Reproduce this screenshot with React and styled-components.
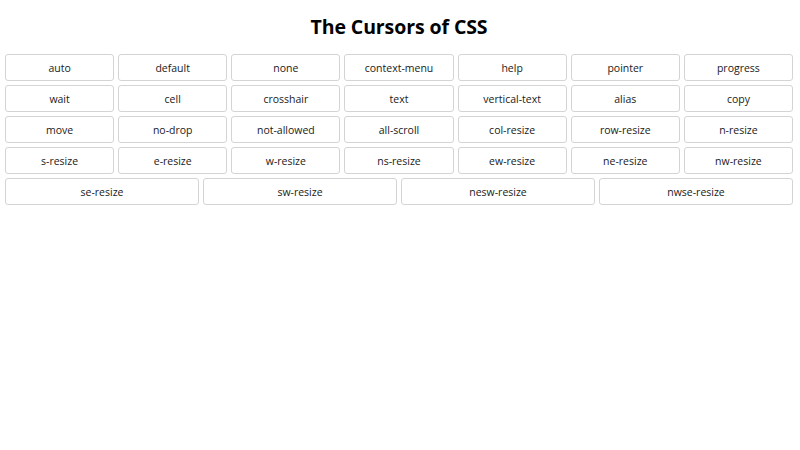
import React from "react";
import styled, { createGlobalStyle } from "styled-components";

const GlobalStyle = createGlobalStyle`
  body {
    margin: 0;
    background: #fff;
    font-family: "Open Sans", "Noto Sans", sans-serif;
    color: #111;
  }
`;

const Page = styled.div`
  padding: 0 7px 0 5px;
`;

const Title = styled.h1`
  margin: 13px 0 13px;
  text-align: center;
  font-size: 19.5px;
  font-weight: 700;
  line-height: 28px;
  letter-spacing: -0.1px;
  color: #000;
`;

const Grid = styled.div`
  display: flex;
  flex-wrap: wrap;
  gap: 4px;
`;

const CursorBox = styled.div`
  flex: 1 1 100px;
  height: 27px;
  box-sizing: border-box;
  border: 1.5px solid #d4d4d4;
  border-radius: 3px;
  display: flex;
  align-items: center;
  justify-content: center;
  font-size: 10.5px;
  color: #1a1a1a;
  cursor: ${(p) => p.$cursor};
`;

const cursors = [
  "auto", "default", "none", "context-menu", "help", "pointer", "progress",
  "wait", "cell", "crosshair", "text", "vertical-text", "alias", "copy",
  "move", "no-drop", "not-allowed", "all-scroll", "col-resize", "row-resize", "n-resize",
  "s-resize", "e-resize", "w-resize", "ns-resize", "ew-resize", "ne-resize", "nw-resize",
  "se-resize", "sw-resize", "nesw-resize", "nwse-resize",
];

export default function App() {
  return (
    <>
      <GlobalStyle />
      <Page>
        <Title>The Cursors of CSS</Title>
        <Grid>
          {cursors.map((c) => (
            <CursorBox key={c} $cursor={c}>
              {c}
            </CursorBox>
          ))}
        </Grid>
      </Page>
    </>
  );
}
